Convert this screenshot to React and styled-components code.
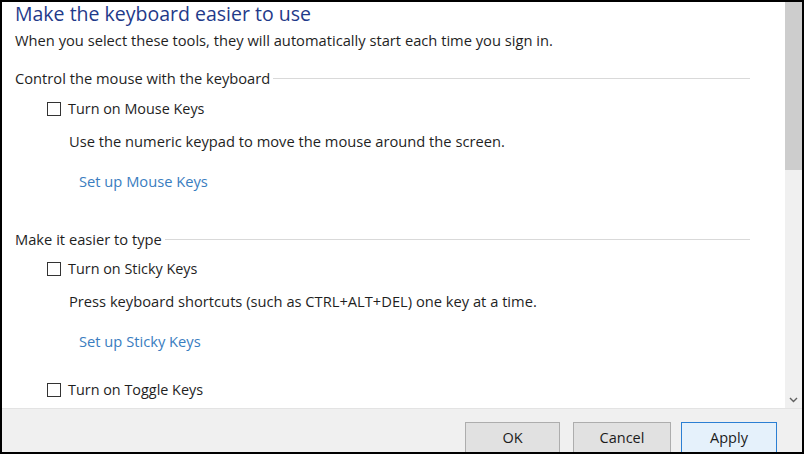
import React from "react";
import styled, { createGlobalStyle } from "styled-components";

const Global = createGlobalStyle`
  html, body {
    margin: 0;
    padding: 0;
    background: #000;
  }
  body {
    font-family: "Open Sans", "Noto Sans", sans-serif;
  }
`;

const Window = styled.div`
  width: 800px;
  height: 450px;
  border: 2px solid #000;
  background: #ffffff;
  display: flex;
  flex-direction: column;
  overflow: hidden;
`;

const Body = styled.div`
  flex: 1;
  display: flex;
  min-height: 0;
`;

const Content = styled.div`
  flex: 1;
  padding: 0 0 0 13px;
  overflow: hidden;
  color: #1f1f1f;
  font-size: 14.7px;
`;

const Title = styled.h1`
  margin: -1px 0 0;
  font-size: 19.5px;
  line-height: 26px;
  font-weight: 400;
  color: #1f3a8a;
`;

const Line = styled.div`
  margin-top: ${(p) => p.$top || 0}px;
  padding-left: ${(p) => p.$indent || 0}px;
  line-height: 20px;
  white-space: nowrap;
`;

const GroupHeader = styled.div`
  margin-top: ${(p) => p.$top}px;
  display: flex;
  align-items: center;
  width: 735px;
  line-height: 20px;
  white-space: nowrap;

  &::after {
    content: "";
    flex: 1;
    height: 1px;
    margin-left: 3px;
    background: #d9d9d9;
  }
`;

const CheckRow = styled.label`
  margin-top: ${(p) => p.$top}px;
  padding-left: 32px;
  display: flex;
  align-items: center;
  gap: 7px;
  line-height: 20px;
  font-size: 14.4px;
`;

const Box = styled.span`
  width: 12px;
  height: 12px;
  border: 1px solid #333;
  background: #fff;
`;

const Link = styled.a`
  display: block;
  margin-top: ${(p) => p.$top}px;
  padding-left: 64px;
  line-height: 20px;
  color: #3a7dc0;
  text-decoration: none;
`;

const Scrollbar = styled.div`
  width: 17px;
  display: flex;
  flex-direction: column;
  background: #f0f0f0;
`;

const Thumb = styled.div`
  height: 168px;
  background: #cdcdcd;
`;

const Track = styled.div`
  flex: 1;
`;

const Arrow = styled.div`
  height: 17px;
  display: flex;
  align-items: center;
  justify-content: center;
`;

const Footer = styled.div`
  height: 44px;
  border-top: 1px solid #e3e3e3;
  background: #f0f0f0;
  display: flex;
  justify-content: flex-end;
  align-items: flex-start;
  padding: 13px 25px 0 0;
  box-sizing: border-box;
`;

const Button = styled.button`
  width: ${(p) => p.$w}px;
  height: 32px;
  margin-left: ${(p) => p.$gap}px;
  border: 1px solid ${(p) => (p.$primary ? "#2b7fd3" : "#adadad")};
  background: ${(p) => (p.$primary ? "#e5f1fb" : "#e1e1e1")};
  font-family: "Open Sans", "Noto Sans", sans-serif;
  font-size: 14.5px;
  color: #1b1b1b;
  padding: 0 0 2px;
`;

export default function App() {
  return (
    <>
      <Global />
      <Window>
        <Body>
          <Content>
            <Title>Make the keyboard easier to use</Title>
            <Line $top={3}>
              When you select these tools, they will automatically start each time you sign in.
            </Line>

            <GroupHeader $top={18}>Control the mouse with the keyboard</GroupHeader>
            <CheckRow $top={11}>
              <Box />
              Turn on Mouse Keys
            </CheckRow>
            <Line $top={12} $indent={54}>
              Use the numeric keypad to move the mouse around the screen.
            </Line>
            <Link $top={20}>Set up Mouse Keys</Link>

            <GroupHeader $top={38}>Make it easier to type</GroupHeader>
            <CheckRow $top={10}>
              <Box />
              Turn on Sticky Keys
            </CheckRow>
            <Line $top={12} $indent={54}>
              Press keyboard shortcuts (such as CTRL+ALT+DEL) one key at a time.
            </Line>
            <Link $top={20}>Set up Sticky Keys</Link>
            <CheckRow $top={29}>
              <Box />
              Turn on Toggle Keys
            </CheckRow>
          </Content>
          <Scrollbar>
            <Thumb />
            <Track />
            <Arrow>
              <svg width="9" height="6" viewBox="0 0 9 6">
                <path d="M1 1 L4.5 4.5 L8 1" fill="none" stroke="#606060" strokeWidth="1.4" />
              </svg>
            </Arrow>
          </Scrollbar>
        </Body>
        <Footer>
          <Button $w={95}>OK</Button>
          <Button $w={98} $gap={13}>Cancel</Button>
          <Button $w={96} $gap={10} $primary>Apply</Button>
        </Footer>
      </Window>
    </>
  );
}
